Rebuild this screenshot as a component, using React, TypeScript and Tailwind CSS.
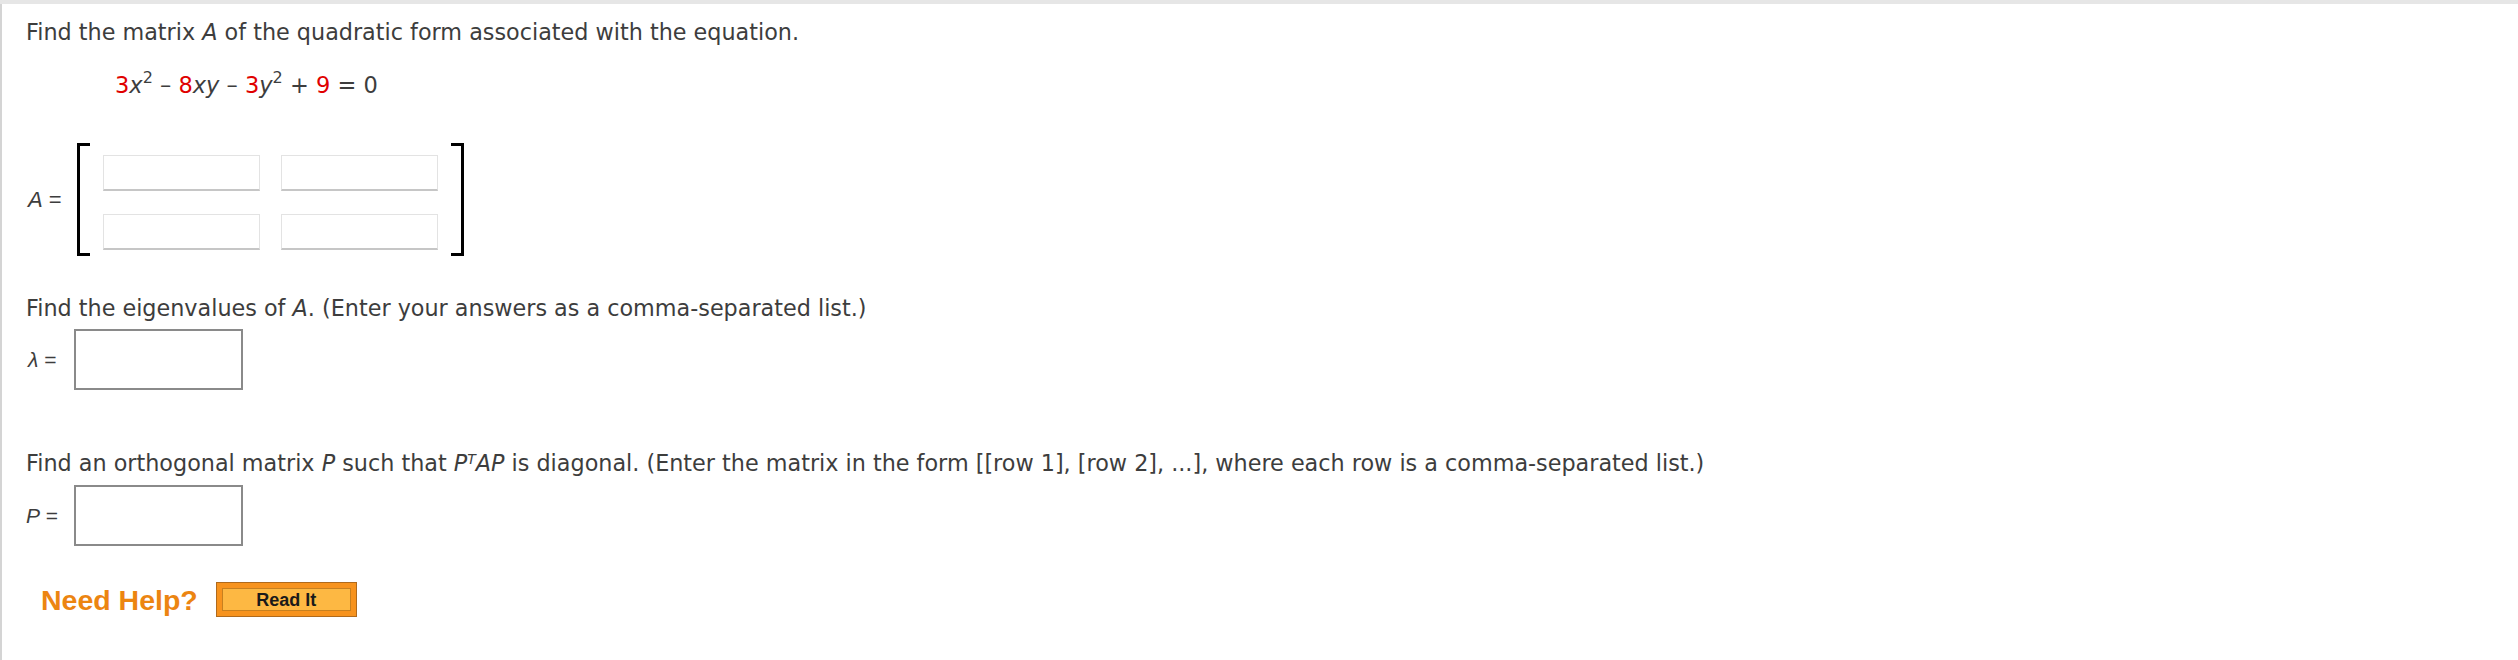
import React from "react";

const body = "font-['DejaVu_Sans',Verdana,sans-serif]";
const label = "font-['Liberation_Sans',Arial,sans-serif]";

function Cell() {
  return (
    <div className="w-[157px] h-[36px] bg-white border border-[#e3e3e3] border-b-2 border-b-[#c6c6c6]" />
  );
}

function AnswerBox() {
  return <div className="w-[169px] h-[61px] bg-white border-2 border-[#8a8a8a]" />;
}

export default function App() {
  return (
    <div className="min-h-[660px] w-full bg-white border-t-4 border-[#e6e6e6]">
      <div className={`min-h-[656px] border-l-2 border-[#d4d4d4] pl-[24px] pt-[12px] text-[#3d3d3d] ${body} text-[22.3px] leading-[32px]`}>
        {/* Part 1 */}
        <p>
          Find the matrix <i>A</i> of the quadratic form associated with the equation.
        </p>
        <p className="mt-[21px] ml-[89px] text-[22.5px]">
          <span className="text-[#e00000]">3</span>
          <i>x</i>
          <sup className="text-[16px] -top-[0.6em]">2</sup> – <span className="text-[#e00000]">8</span>
          <i>xy</i> – <span className="text-[#e00000]">3</span>
          <i>y</i>
          <sup className="text-[16px] -top-[0.6em]">2</sup> + <span className="text-[#e00000]">9</span> = 0
        </p>

        <div className="mt-[42px] flex items-center">
          <span className={`${label} text-[22px] w-[51px] pl-[2px]`}>
            <i>A</i> =
          </span>
          <div className="flex items-stretch h-[113px]">
            <div className="w-[13px] border-l-[3px] border-y-[3px] border-black" />
            <div className="grid grid-cols-2 gap-x-[21px] gap-y-[16px] px-[13px] pt-[12px]">
              <Cell />
              <Cell />
              <Cell />
              <Cell />
            </div>
            <div className="w-[13px] border-r-[3px] border-y-[3px] border-black" />
          </div>
        </div>

        {/* Part 2 */}
        <p className="mt-[36px]">
          Find the eigenvalues of <i>A</i>. (Enter your answers as a comma-separated list.)
        </p>
        <div className="mt-[5px] flex items-center">
          <span className={`${label} text-[21px] w-[48px] pl-[2px]`}>
            <i>λ</i> =
          </span>
          <AnswerBox />
        </div>

        {/* Part 3 */}
        <p className="mt-[57px]">
          Find an orthogonal matrix <i>P</i> such that <i>P</i>
          <sup className="text-[14px]">
            <i>T</i>
          </sup>
          <i>AP</i> is diagonal. (Enter the matrix in the form [[row 1], [row 2], ...], where each row is a
          comma-separated list.)
        </p>
        <div className="mt-[6px] flex items-center">
          <span className={`${label} text-[21px] w-[48px]`}>
            <i>P</i> =
          </span>
          <AnswerBox />
        </div>

        {/* Help */}
        <div className="mt-[36px] ml-[15px] flex items-center gap-[18px]">
          <span className={`${label} font-bold text-[28.5px] text-[#ec8511]`}>Need Help?</span>
          <button className="w-[141px] h-[35px] bg-[#f7931e] border border-[#b06a1c] p-[5px]">
            <span
              className={`flex h-full w-full items-center justify-center bg-[#fdb843] border border-[#c7801f] ${label} font-bold text-[18px] leading-none text-[#1a1a1a]`}
            >
              Read It
            </span>
          </button>
        </div>
      </div>
    </div>
  );
}
